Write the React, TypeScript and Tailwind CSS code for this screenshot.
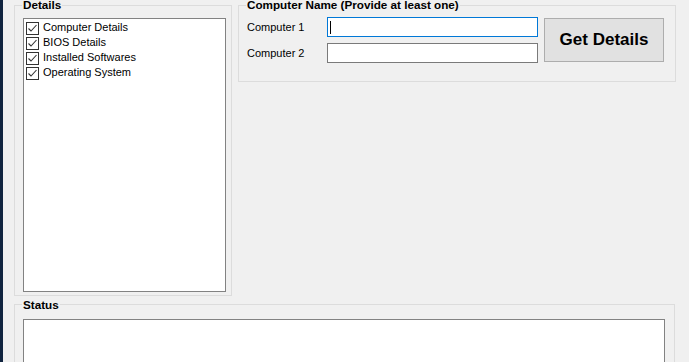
import React from "react";

const font = { fontFamily: '"Liberation Sans", Arial, sans-serif' };

function Check({ label }: { label: string }) {
  return (
    <div className="flex h-[15px] items-start gap-[4px]">
      <div className="mt-[2px] h-[13px] w-[13px] shrink-0 border border-[#333333] bg-white">
        <svg width="11" height="11" viewBox="0 0 11 11" className="block">
          <polyline points="1.5,5.5 4,8 9.5,2" fill="none" stroke="#333333" strokeWidth="1.1" />
        </svg>
      </div>
      <span className="text-[11px] leading-[15px] text-black">{label}</span>
    </div>
  );
}

export default function App() {
  return (
    <div className="flex h-[362px] w-[689px] overflow-hidden bg-[#f0f0f0]" style={font}>
      <div className="h-full w-[3px] shrink-0 bg-[#10243f]" />
      <div className="flex flex-col pl-[11px] pt-[5px]">
        <div className="flex gap-[6px]">
          {/* Details */}
          <div className="relative h-[291px] w-[218px] border border-[#dcdcdc] pb-[3px] pl-[8px] pr-[5px] pt-[12px]">
            <span className="absolute -top-[7px] left-[7px] bg-[#f0f0f0] px-[1px] text-[11.7px] font-bold leading-none text-black">
              Details
            </span>
            <div className="h-[274px] w-[203px] border border-[#828282] bg-white pl-[2px] pt-[1px]">
              <Check label="Computer Details" />
              <Check label="BIOS Details" />
              <Check label="Installed Softwares" />
              <Check label="Operating System" />
            </div>
          </div>
          {/* Computer Name */}
          <div className="relative flex h-[77px] w-[438px] items-start gap-[6px] border border-[#dcdcdc] pl-[8px] pt-[11px]">
            <span className="absolute -top-[7px] left-[7px] bg-[#f0f0f0] px-[1px] text-[11.7px] font-bold leading-none text-black">
              Computer Name (Provide at least one)
            </span>
            <div className="flex flex-col gap-[6px]">
              <div className="flex h-[20px] items-center">
                <span className="w-[80px] text-[11px] text-black">Computer 1</span>
                <div className="flex h-[20px] w-[211px] items-center border border-[#0078d7] bg-white pl-[2px]">
                  <div className="h-[13px] w-[1px] bg-black" />
                </div>
              </div>
              <div className="flex h-[20px] items-center">
                <span className="w-[80px] text-[11px] text-black">Computer 2</span>
                <div className="h-[20px] w-[211px] border border-[#7a7a7a] bg-white" />
              </div>
            </div>
            <button className="mt-[1px] flex h-[44px] w-[120px] items-center justify-center border border-[#adadad] bg-[#e1e1e1] text-[17px] font-bold text-black">
              Get Details
            </button>
          </div>
        </div>
        {/* Status */}
        <div className="relative mt-[8px] h-[80px] w-[661px] border border-[#dcdcdc] pl-[8px] pt-[14px]">
          <span className="absolute -top-[6px] left-[7px] bg-[#f0f0f0] px-[1px] text-[11.7px] font-bold leading-none text-black">
            Status
          </span>
          <div className="h-[60px] w-[642px] border border-[#828282] bg-white" />
        </div>
      </div>
    </div>
  );
}
